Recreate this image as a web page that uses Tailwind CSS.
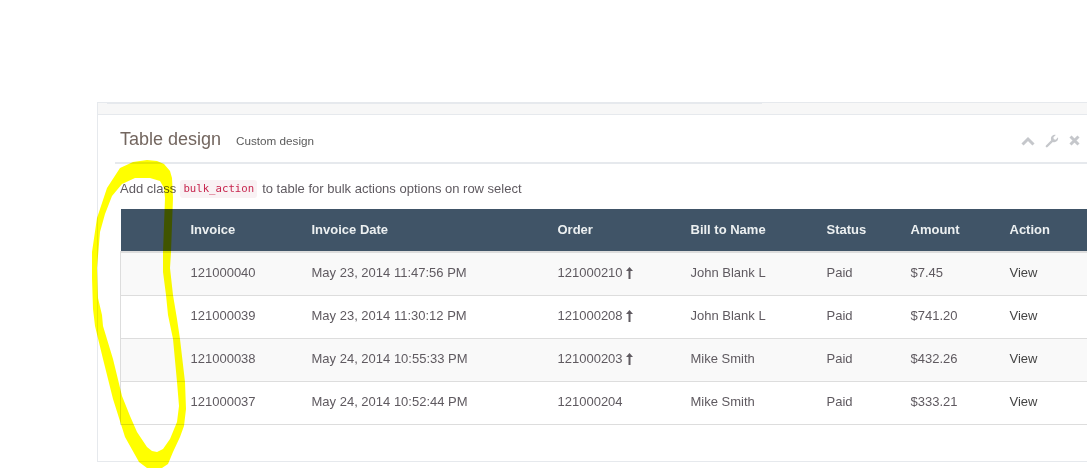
<!DOCTYPE html>
<html lang="en">
<head>
  <meta charset="utf-8">
  <script src="https://cdn.jsdelivr.net/npm/@tailwindcss/browser@4"></script>
  <title>Table design</title>
</head>
<body class="bg-white">
  <div class="relative h-[469px] w-[1087px] overflow-hidden pt-[102px] pl-[97px] font-['Liberation_Sans',sans-serif] text-[13px] text-[#5f5a60]">
    <!-- band left over from the panel above -->
    <div class="h-[12px] border-l border-t border-[#e6e9ed] bg-[#f7f7f7] pl-[9px]">
      <div class="h-px w-[655px] bg-[#e6e9ed]"></div>
    </div>

    <div class="h-[348px] border border-r-0 border-[#e6e9ed] bg-white pl-[17px]">
      <div class="flex h-[49px] items-center justify-between border-b-2 border-[#e6e9ed] pl-[5px] pr-[7px]">
        <div class="flex items-baseline gap-[15px] pt-px">
          <h2 class="text-[18px] text-[#73665f]">Table design</h2>
          <span class="text-[11.7px] text-[#5a5a5a]">Custom design</span>
        </div>
        <div class="flex items-center gap-[10px] pt-[4px] text-[#c5c7cb]">
          <svg width="14" height="10" viewBox="0 0 14 10" fill="none" stroke="currentColor" stroke-width="3"><path d="M1.5 8.5 7 3l5.5 5.5"/></svg>
          <svg width="14" height="14" viewBox="0 0 14 14" fill="currentColor"><path d="M1 11.4 6.2 6.2C5.6 4.4 6 3 7 2c1-1 2.4-1.400 3.800-1L8.400 3.300l.4 1.900 1.900.5L13 3.300c.4 1.400 0 2.800-1 3.800s-2.500 1.400-4.200.8L2.600 13.100a1.100 1.100 0 0 1-1.600 0 1.200 1.200 0 0 1 0-1.700z"/></svg>
          <svg width="11" height="11" viewBox="0 0 11 11" fill="none" stroke="currentColor" stroke-width="3"><path d="m1.500 1.500 8 8m0-8-8 8"/></svg>
        </div>
      </div>

      <p class="mt-[16px] flex h-[18px] items-center pl-[5px]">
        Add class
        <code class="ml-[4px] mr-[5px] rounded-[3px] bg-[#f9f2f4] px-[3px] py-[1px] font-['DejaVu_Sans_Mono',monospace] text-[10.7px] text-[#c7254e]">bulk_action</code>
        to table for bulk actions options on row select
      </p>

      <table class="mt-[11px] ml-[5px] w-[980px] table-fixed border-collapse text-left">
        <colgroup>
          <col class="w-[60px]"><col class="w-[121px]"><col class="w-[246px]"><col class="w-[133px]"><col class="w-[136px]"><col class="w-[84px]"><col class="w-[99px]"><col>
        </colgroup>
        <thead>
          <tr class="h-[43px] border-b-2 border-[#dddddd] bg-[#405467] font-bold text-[#ecf0f1]">
            <th></th><th class="pl-[10px]">Invoice</th><th class="pl-[10px]">Invoice Date</th><th class="pl-[10px]">Order</th><th class="pl-[10px]">Bill to Name</th><th class="pl-[10px]">Status</th><th class="pl-[10px]">Amount</th><th class="pl-[10px]">Action</th>
          </tr>
        </thead>
        <tbody>
          <tr class="h-[43px] border-b border-l border-[#dddddd] bg-[#f9f9f9]">
            <td></td><td class="pb-[2px] pl-[10px]">121000040</td><td class="pb-[2px] pl-[10px]">May 23, 2014 11:47:56 PM</td><td class="pb-[2px] pl-[10px]">121000210 <svg class="inline-block align-[-2px]" width="7" height="12" viewBox="0 0 7 12" fill="#5f5a60"><path d="M3.500 0 7 4H4.500v8h-2V4H0z"/></svg></td><td class="pb-[2px] pl-[10px]">John Blank L</td><td class="pb-[2px] pl-[10px]">Paid</td><td class="pb-[2px] pl-[10px]">$7.45</td><td class="pb-[2px] pl-[10px] text-[#444]">View</td>
          </tr>
          <tr class="h-[43px] border-b border-l border-[#dddddd] bg-white">
            <td></td><td class="pb-[2px] pl-[10px]">121000039</td><td class="pb-[2px] pl-[10px]">May 23, 2014 11:30:12 PM</td><td class="pb-[2px] pl-[10px]">121000208 <svg class="inline-block align-[-2px]" width="7" height="12" viewBox="0 0 7 12" fill="#5f5a60"><path d="M3.500 0 7 4H4.500v8h-2V4H0z"/></svg></td><td class="pb-[2px] pl-[10px]">John Blank L</td><td class="pb-[2px] pl-[10px]">Paid</td><td class="pb-[2px] pl-[10px]">$741.20</td><td class="pb-[2px] pl-[10px] text-[#444]">View</td>
          </tr>
          <tr class="h-[43px] border-b border-l border-[#dddddd] bg-[#f9f9f9]">
            <td></td><td class="pb-[2px] pl-[10px]">121000038</td><td class="pb-[2px] pl-[10px]">May 24, 2014 10:55:33 PM</td><td class="pb-[2px] pl-[10px]">121000203 <svg class="inline-block align-[-2px]" width="7" height="12" viewBox="0 0 7 12" fill="#5f5a60"><path d="M3.500 0 7 4H4.500v8h-2V4H0z"/></svg></td><td class="pb-[2px] pl-[10px]">Mike Smith</td><td class="pb-[2px] pl-[10px]">Paid</td><td class="pb-[2px] pl-[10px]">$432.26</td><td class="pb-[2px] pl-[10px] text-[#444]">View</td>
          </tr>
          <tr class="h-[43px] border-b border-l border-[#dddddd] bg-white">
            <td></td><td class="pb-[2px] pl-[10px]">121000037</td><td class="pb-[2px] pl-[10px]">May 24, 2014 10:52:44 PM</td><td class="pb-[2px] pl-[10px]">121000204</td><td class="pb-[2px] pl-[10px]">Mike Smith</td><td class="pb-[2px] pl-[10px]">Paid</td><td class="pb-[2px] pl-[10px]">$333.21</td><td class="pb-[2px] pl-[10px] text-[#444]">View</td>
          </tr>
        </tbody>
      </table>
    </div>

    <!-- yellow highlighter scribble on top of the screenshot -->
    <svg class="absolute left-0 top-0 mix-blend-multiply" width="1087" height="469" viewBox="0 0 1087 469">
      <path fill="#ffff00" fill-rule="evenodd" d="M147 160L157 161L164 164L170 171L172 178L173 198L171 252L170 268L173 295L177 319L180 339L185 382L186 409L184 426L180 437L173 452L168 464L162 468L147 468L139 462L125 437L113 399L103 359L95 326L93 309L92 278L92 252L97 218L107 188L120 168L133 162ZM135 178L122 184L112 196L105 214L100 232L97 268L98 298L102 315L103 326L113 359L122 396L130 416L137 432L147 447L152 451L157 452L163 449L170 439L177 422L179 406L177 382L173 339L168 315L166 295L163 272L163 252L165 198L164 188L160 181L150 178Z"/>
    </svg>
  </div>
</body>
</html>
